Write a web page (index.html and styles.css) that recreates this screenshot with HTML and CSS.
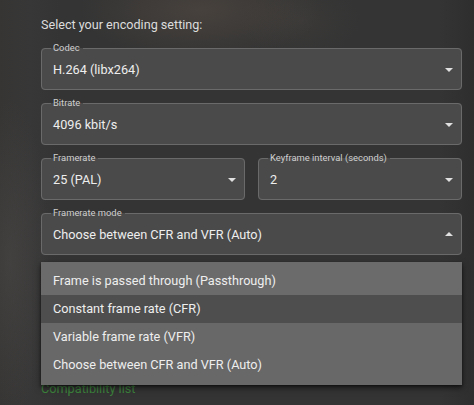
FILE: index.html
```html
<!DOCTYPE html>
<html>
<head>
<meta charset="utf-8">
<link rel="stylesheet" href="styles.css">
</head>
<body>
<div class="page">
  <div class="panel">
    <div class="title">Select your encoding setting:</div>

    <fieldset class="field">
      <legend>Codec</legend>
      <div class="value"><span>H.264 (libx264)</span><span class="caret"></span></div>
    </fieldset>

    <fieldset class="field">
      <legend>Bitrate</legend>
      <div class="value"><span>4096 kbit/s</span><span class="caret"></span></div>
    </fieldset>

    <div class="pair">
      <fieldset class="field">
        <legend>Framerate</legend>
        <div class="value"><span>25 (PAL)</span><span class="caret"></span></div>
      </fieldset>
      <fieldset class="field">
        <legend>Keyframe interval (seconds)</legend>
        <div class="value"><span>2</span><span class="caret"></span></div>
      </fieldset>
    </div>

    <div class="dropwrap">
      <fieldset class="field last">
        <legend>Framerate mode</legend>
        <div class="value"><span>Choose between CFR and VFR (Auto)</span><span class="caret up"></span></div>
      </fieldset>
      <ul class="menu">
        <li class="item first">Frame is passed through (Passthrough)</li>
        <li class="item active">Constant frame rate (CFR)</li>
        <li class="item">Variable frame rate (VFR)</li>
        <li class="item">Choose between CFR and VFR (Auto)</li>
      </ul>
    </div>

    <div class="compat">Compatibility list</div>
  </div>
</div>
</body>
</html>
```

FILE: styles.css
```css
html, body {
  margin: 0;
  padding: 0;
}
body {
  width: 474px;
  height: 405px;
  overflow: hidden;
  font-family: Roboto, "Noto Sans", "Liberation Sans", sans-serif;
  background-color: #333333;
  background-image:
    radial-gradient(ellipse 40px 160px at 10px 260px, rgba(80,78,76,0.45), rgba(80,78,76,0) 100%),
    radial-gradient(ellipse 120px 50px at 200px 10px, rgba(95,82,72,0.45), rgba(95,82,72,0) 100%),
    radial-gradient(ellipse 60px 40px at 300px 20px, rgba(70,66,62,0.35), rgba(70,66,62,0) 100%),
    linear-gradient(90deg, #363534 0px, #383737 30px, #343434 60px, #343434 440px, #2e2e2e 474px);
}
.page {
  padding: 16px 12px 0 41px;
}
.panel {
  width: 421px;
}
.title {
  font-size: 12.6px;
  line-height: 18px;
  color: #dcdcdc;
  margin-bottom: 8px;
}
.field {
  margin: 0 0 7px 0;
  padding: 0 8px 5px 9px;
  border: 1px solid #6a6a6a;
  border-radius: 4px;
  background: #4a4a4a;
  min-width: 0;
}
.field.last {
  margin-bottom: 0;
}
.field legend {
  font-size: 9.4px;
  line-height: 12px;
  color: #cfcfcf;
  padding: 0 3px 0 2px;
}
.value {
  display: flex;
  align-items: center;
  justify-content: space-between;
  height: 30px;
  font-size: 12.7px;
  color: #eeeeee;
  padding-left: 2px;
}
.caret {
  width: 0;
  height: 0;
  border-left: 4px solid transparent;
  border-right: 4px solid transparent;
  border-top: 4px solid #e0e0e0;
  margin-top: 1px;
}
.caret.up {
  border-top: none;
  border-bottom: 4px solid #e0e0e0;
  margin-top: -1px;
}
.pair {
  display: grid;
  grid-template-columns: 1fr 1fr;
  column-gap: 13px;
}
.dropwrap {
  position: relative;
}
.menu {
  position: absolute;
  left: 0;
  top: calc(100% + 7px);
  width: 421px;
  margin: 0;
  padding: 0 0 6px 0;
  list-style: none;
  background: #686868;
  box-shadow: 0 3px 6px rgba(0,0,0,0.55), 0 1px 2px rgba(0,0,0,0.4);
  z-index: 2;
}
.item {
  height: 28px;
  line-height: 28px;
  padding-left: 12px;
  font-size: 12.7px;
  color: #eeeeee;
}
.item.first {
  height: 33px;
  box-sizing: border-box;
  padding-top: 5px;
  line-height: 28px;
  background: #6b6b6b;
}
.item.active {
  background: #4e4e4e;
}
.compat {
  margin-top: 125px;
  font-size: 12.7px;
  line-height: 18px;
  color: #3d833d;
}
```
